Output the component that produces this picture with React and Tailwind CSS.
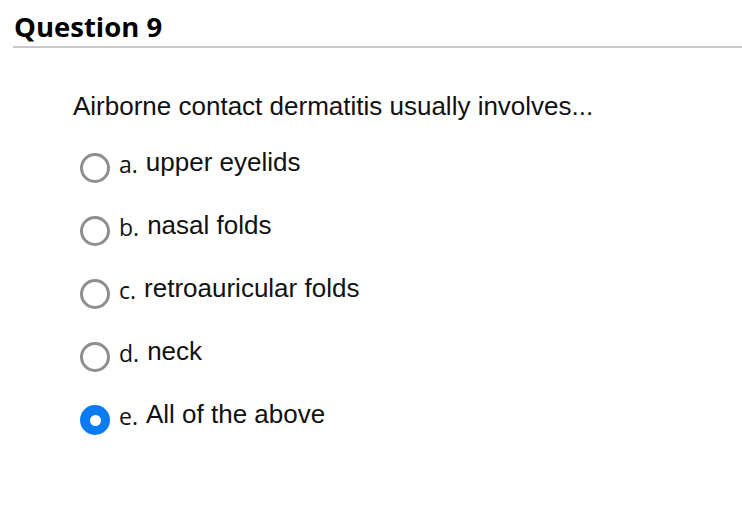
const options = [
  { key: 'a.', text: 'upper eyelids' },
  { key: 'b.', text: 'nasal folds' },
  { key: 'c.', text: 'retroauricular folds' },
  { key: 'd.', text: 'neck' },
  { key: 'e.', text: 'All of the above', checked: true },
]

export default function App() {
  return (
    <div className="w-[742px] h-[519px] bg-white overflow-hidden">
      <div className="pl-[14px] pt-[9px]">
        <h1 className="text-[27.5px] font-bold text-black leading-[36px] font-['Open_Sans',sans-serif]">Question 9</h1>
      </div>
      <div className="ml-[13px] mt-[1px] h-[2px] bg-[#c8c8c8]" />

      <div className="pl-[73px] pt-[43px] font-['Liberation_Sans',Arial,sans-serif] text-[#111]">
        <p className="text-[26px] leading-[30px]">Airborne contact dermatitis usually involves...</p>

        <div className="mt-[32px] flex flex-col gap-[33px]">
          {options.map((o) => (
            <div key={o.key} className="flex items-start h-[30px]">
              {o.checked ? (
                <span className="ml-[7px] shrink-0 w-[30px] h-[30px] rounded-full bg-[#0b7bf4] flex items-center justify-center">
                  <span className="w-[11px] h-[11px] rounded-full bg-white" />
                </span>
              ) : (
                <span className="ml-[7px] shrink-0 w-[30px] h-[30px] rounded-full border-[3px] border-[#8e8e8e]" />
              )}
              <span className="ml-[9px] -mt-[4px] leading-[30px] text-[23px] font-['Open_Sans',sans-serif]">{o.key}</span>
              <span className="ml-[8px] -mt-[6px] leading-[30px] text-[26px]">{o.text}</span>
            </div>
          ))}
        </div>
      </div>
    </div>
  )
}
